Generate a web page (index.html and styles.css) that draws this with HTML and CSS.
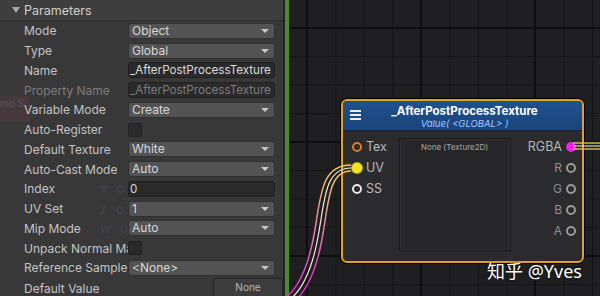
FILE: index.html
```html
<!DOCTYPE html>
<html lang="en">
<head>
    <meta charset="UTF-8">
    <title>Shader Graph - Texture Parameter</title>
    <link rel="stylesheet" href="styles.css">
</head>
<body>
    <div class="app">
        <aside class="inspector">
            <div class="section-head"><span class="fold"></span>Parameters</div>

            <div class="ghost ghost-node">mo S</div>
            <div class="ghost ghost-y">Y O</div>
            <div class="ghost ghost-z">Z O</div>
            <div class="ghost ghost-w">W O</div>

            <div class="row"><div class="label">Mode</div><div class="dropdown">Object</div></div>
            <div class="row"><div class="label">Type</div><div class="dropdown">Global</div></div>
            <div class="row"><div class="label">Name</div><div class="textfield">_AfterPostProcessTexture</div></div>
            <div class="row disabled"><div class="label">Property Name</div><div class="textfield">_AfterPostProcessTexture</div></div>
            <div class="row"><div class="label">Variable Mode</div><div class="dropdown">Create</div></div>
            <div class="row"><div class="label">Auto-Register</div><div class="checkbox"></div></div>
            <div class="row"><div class="label">Default Texture</div><div class="dropdown">White</div></div>
            <div class="row"><div class="label">Auto-Cast Mode</div><div class="dropdown">Auto</div></div>
            <div class="row"><div class="label">Index</div><div class="textfield">0</div></div>
            <div class="row"><div class="label">UV Set</div><div class="dropdown">1</div></div>
            <div class="row"><div class="label">Mip Mode</div><div class="dropdown">Auto</div></div>
            <div class="row"><div class="label">Unpack Normal Map</div><div class="checkbox"></div></div>
            <div class="row"><div class="label">Reference Sample</div><div class="dropdown">&lt;None&gt;</div></div>
            <div class="row row-object">
                <div class="label">Default Value</div>
                <div class="object-field">None<br>(Texture2D)</div>
            </div>
        </aside>
        <div class="divider"></div>
        <div class="edge"></div>
        <main class="canvas">
            <div class="node">
                <div class="node-head">
                    <div class="menu-icon"><span></span><span></span><span></span></div>
                    <div class="node-title">_AfterPostProcessTexture</div>
                    <div class="node-sub">Value( &lt;GLOBAL&gt; )</div>
                </div>
                <div class="node-body">
                    <div class="ports inputs">
                        <div class="port"><span class="dot ring orange"></span>Tex</div>
                        <div class="port"><span class="dot filled yellow"></span>UV</div>
                        <div class="port"><span class="dot ring white"></span>SS</div>
                    </div>
                    <div class="preview">None (Texture2D)</div>
                    <div class="ports outputs">
                        <div class="port main">RGBA<span class="dot filled magenta"></span></div>
                        <div class="port">R<span class="dot ring grey"></span></div>
                        <div class="port">G<span class="dot ring grey"></span></div>
                        <div class="port">B<span class="dot ring grey"></span></div>
                        <div class="port">A<span class="dot ring grey"></span></div>
                    </div>
                </div>
            </div>

            <svg class="wires" width="330" height="296" viewBox="-20 0 330 296">
                <defs>
                    <linearGradient id="wireGrad" x1="0" y1="296" x2="0" y2="160" gradientUnits="userSpaceOnUse">
                        <stop offset="0" stop-color="#e020d0"/>
                        <stop offset="0.45" stop-color="#e07ab0"/>
                        <stop offset="1" stop-color="#f0d840"/>
                    </linearGradient>
                </defs>
                <path d="M62 165 C30 165 32 200 24 240 C18 270 8 290 -6 300" stroke="url(#wireGrad)" stroke-width="1.5" fill="none"/>
                <path d="M62 168 C34 168 36 204 28 242 C22 272 12 292 -2 302" stroke="#f4f0e0" stroke-width="1.2" fill="none"/>
                <path d="M62 171 C38 171 40 206 32 244 C26 274 16 294 2 304" stroke="url(#wireGrad)" stroke-width="1.5" fill="none"/>
                <path d="M284 143 L312 143" stroke="#e8cf50" stroke-width="1.3"/>
                <path d="M284 146 L312 146" stroke="#f0e6b0" stroke-width="1.1"/>
                <path d="M284 149 L312 149" stroke="#e8cf50" stroke-width="1.3"/>
            </svg>

            <div class="watermark">知乎 @Yves</div>
        </main>
    </div>
</body>
</html>
```

FILE: styles.css
```css
* {
    margin: 0;
    padding: 0;
    box-sizing: border-box;
}

body {
    width: 600px;
    height: 296px;
    overflow: hidden;
    background: #1e1e20;
    font-family: Inter, 'Noto Sans', sans-serif;
    font-size: 12px;
    color: #c4c4c4;
}

.app {
    display: flex;
    height: 296px;
}

/* inspector */

.inspector {
    position: relative;
    width: 283px;
    flex-shrink: 0;
    background: #383838;
    overflow: hidden;
}

.section-head {
    display: flex;
    align-items: center;
    height: 21px;
    padding-left: 12px;
    background: #3e3e3e;
    border-bottom: 1px solid #2e2e2e;
    color: #d0d0d0;
    font-size: 12.5px;
}

.fold {
    width: 0;
    height: 0;
    margin-right: 4px;
    border-left: 4px solid transparent;
    border-right: 4px solid transparent;
    border-top: 6px solid #a8a8a8;
}

.row {
    position: relative;
    display: flex;
    align-items: center;
    height: 19.75px;
    padding-left: 24px;
}

.label {
    width: 104px;
    flex-shrink: 0;
    white-space: nowrap;
    overflow: hidden;
    color: #c4c4c4;
}

.disabled .label,
.disabled .textfield {
    color: #7c7c7c;
}

.dropdown,
.textfield {
    position: relative;
    width: 147px;
    height: 16px;
    padding-left: 3px;
    border-radius: 3px;
    white-space: nowrap;
    overflow: hidden;
    color: #d8d8d8;
}

.dropdown {
    background: #535353;
    border: 1px solid #303030;
    line-height: 14px;
}

.dropdown::after {
    content: "";
    position: absolute;
    right: 5px;
    top: 5px;
    border-left: 4px solid transparent;
    border-right: 4px solid transparent;
    border-top: 4px solid #c8c8c8;
}

.textfield {
    background: #2a2a2a;
    border: 1px solid #212121;
    padding-left: 1px;
    line-height: 14px;
    font-size: 11.6px;
}

.checkbox {
    width: 14px;
    height: 14px;
    background: #2a2a2a;
    border: 1px solid #232323;
    border-radius: 2px;
}

.row-object {
    align-items: flex-start;
    padding-top: 2px;
}

.row-object .label {
    width: 189px;
    margin-top: 1px;
}

.object-field {
    width: 70px;
    height: 30px;
    margin-top: -2px;
    background: #3c3c3c;
    border: 1px solid #242424;
    border-radius: 2px;
    text-align: center;
    font-size: 10px;
    line-height: 13px;
    padding-top: 2px;
    color: #b8b8b8;
}

.ghost {
    position: absolute;
    color: #45424a;
    font-size: 11px;
    font-weight: 600;
    letter-spacing: 3px;
}

.ghost-node {
    left: 0;
    top: 96px;
    width: 30px;
    height: 26px;
    padding-top: 1px;
    background: rgba(110, 60, 80, 0.25);
    color: #5a4a52;
    letter-spacing: 0;
    font-size: 10px;
    white-space: nowrap;
}

.ghost-y { left: 100px; top: 182px; }
.ghost-z { left: 100px; top: 203px; }
.ghost-w { left: 100px; top: 222px; }

.divider {
    width: 2px;
    background: #242424;
    flex-shrink: 0;
}

.edge {
    width: 4px;
    background: #4f8a2c;
    flex-shrink: 0;
}

/* graph canvas */

.canvas {
    position: relative;
    flex: 1;
    background-color: #1f1f21;
    background-image:
        linear-gradient(to right, #0e0e0f 0 2px, transparent 2px),
        linear-gradient(to bottom, #0e0e0f 0 2px, transparent 2px),
        linear-gradient(to right, #141415 0 1px, transparent 1px),
        linear-gradient(to bottom, #141415 0 1px, transparent 1px);
    background-size: 114px 114px, 114px 114px, 28.5px 28.5px, 28.5px 28.5px;
    background-position: 17px 0, 0 27px, 18px 0, 0 -1px;
}

.wires {
    position: absolute;
    left: -20px;
    top: 0;
    overflow: visible;
    pointer-events: none;
}

.node {
    position: absolute;
    left: 52px;
    top: 99px;
    width: 243px;
    height: 164px;
    border: 2px solid #e6a020;
    border-radius: 6px;
    background: #2b2b2d;
    overflow: hidden;
    box-shadow: 0 0 0 1px #000;
}

.node-head {
    position: relative;
    height: 30px;
    background: linear-gradient(to bottom, #20528f, #1a437a);
    border-bottom: 1px solid #18233a;
    text-align: center;
    padding-top: 4px;
}

.menu-icon {
    position: absolute;
    left: 7px;
    top: 9px;
    display: flex;
    flex-direction: column;
    gap: 2px;
}

.menu-icon span {
    width: 11px;
    height: 2px;
    background: #f0f0f0;
}

.node-title {
    color: #ffffff;
    font-weight: 700;
    font-size: 11.5px;
    line-height: 13px;
    padding-left: 4px;
}

.node-sub {
    color: #a7c8ff;
    font-style: italic;
    font-size: 9.5px;
    line-height: 12px;
    padding-left: 4px;
}

.node-body {
    display: flex;
    padding-top: 7px;
}

.ports {
    display: flex;
    flex-direction: column;
}

.inputs {
    width: 56px;
    padding-left: 9px;
    margin-top: -2px;
}

.outputs {
    width: 72px;
    align-items: flex-end;
    padding-right: 6px;
    margin-top: -2px;
}

.port {
    display: flex;
    align-items: center;
    gap: 4px;
    height: 21px;
    font-size: 12.5px;
    color: #b8b8b8;
}

.outputs .port {
    color: #8e8e8e;
    font-size: 12px;
}

.outputs .port.main {
    color: #b8b8b8;
    font-size: 12.5px;
}

.dot {
    width: 10px;
    height: 10px;
    border-radius: 50%;
    flex-shrink: 0;
}

.ring {
    border: 2px solid;
}

.ring.orange { border-color: #e2782a; }
.ring.white { border-color: #e8e8e8; }
.ring.grey { border-color: #9a9a9a; }

.filled.yellow {
    background: #f4e428;
    box-shadow: 0 0 0 1px #b8a818;
}

.filled.magenta {
    background: #f020e8;
}

.preview {
    width: 113px;
    height: 113px;
    background: #262628;
    border: 1px solid #19191a;
    box-shadow: inset 0 0 0 1px #303032;
    text-align: center;
    font-size: 8px;
    color: #a8a8a8;
    padding-top: 3px;
}

.watermark {
    position: absolute;
    left: 198px;
    top: 257px;
    color: #ffffff;
    font-family: 'Noto Sans', 'Noto Sans CJK SC', sans-serif;
    font-size: 18px;
    text-shadow: 0 0 3px rgba(0, 0, 0, 0.8);
    white-space: nowrap;
}
```
